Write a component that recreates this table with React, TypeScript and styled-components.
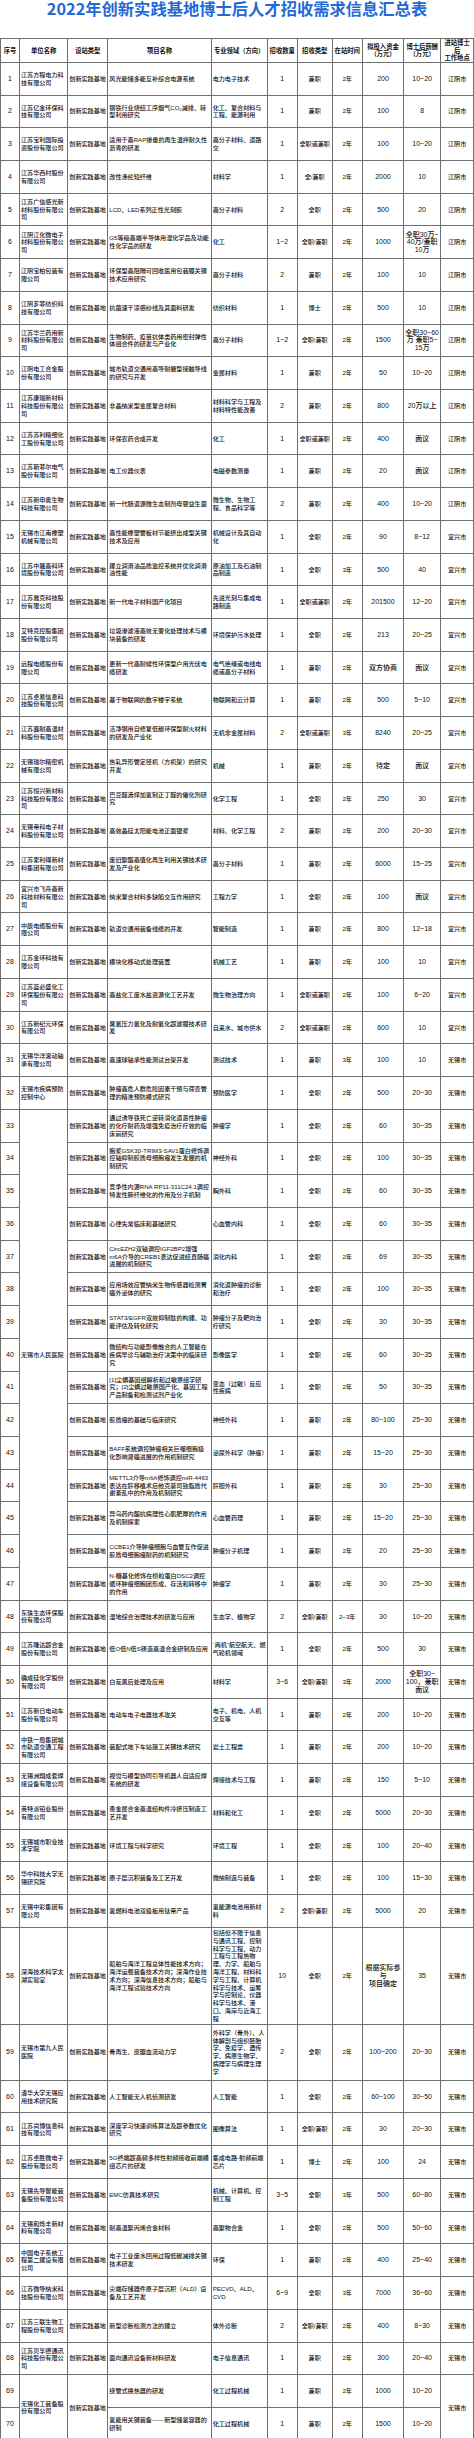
import React from "react";
import styled, {createGlobalStyle} from "styled-components";

type RowData = [number, string | null, string, string, string, string, string, string, string]

const COLS = [19, 48.3, 40, 103.4, 56, 30, 35, 30, 41.6, 36.7, 33.3]

const HEADERS = [
    "序号", "单位名称", "设站类型", "项目名称", "专业领域（方向）", "招收数量", "招收类型",
    "在站时间", "拟投入资金\n（万元）", "博士后薪酬\n（万元）", "进站博士后\n工作地点",
]

// null unit = covered by the merged cell above
const ROWS: RowData[] = [
    [1, "江苏方程电力科技有限公司", "风光能储多能互补综合电源系统", "电力电子技术", "1", "兼职", "2年", "200", "10~20"],
    [2, "江苏亿金环保科技有限公司", "钢铁行业烧结工序烟气CO₂减排、转型利用研究", "化工、复合材料与工程、能源利用", "1", "兼职", "2年", "100", "8"],
    [3, "江苏宝利国际投资股份有限公司", "适用于高RAP掺量的再生温拌耐久性沥青的研发", "高分子材料、道路交", "1", "全职或兼职", "2年", "100", "10~20"],
    [4, "江苏华西村股份有限公司", "改性涤纶短纤维", "材料学", "1", "全/兼职", "2年", "2000", "10"],
    [5, "江苏广信感光新材料股份有限公司", "LCD、LED系列正性光刻胶", "高分子材料", "2", "全职", "2年", "500", "20"],
    [6, "江阴江化微电子材料股份有限公司", "G5等级高端半导体用湿化学品及功能性化学品的研发", "化工", "1~2", "全职/兼职", "2年", "1000", "全职30万~\n40万/兼职\n10万"],
    [7, "江阴宝柏包装有限公司", "环保型高阻隔可回收医用包装膜关键技术应用研究", "高分子材料", "2", "兼职", "2年", "100", "10"],
    [8, "江阴芗菲纺织科技有限公司", "抗菌速干凉感纱线及其面料研发", "纺织材料", "1", "博士", "2年", "500", "10"],
    [9, "江苏华兰药用新材料股份有限公司", "生物制药、疫苗抗体类药用密封弹性体组合件的研发与产业化", "高分子材料", "1~2", "全职/兼职", "2年", "1500", "全职30~60\n万 兼职5~\n15万"],
    [10, "江阴电工合金股份有限公司", "城市轨道交通用高导耐磨型接触导线的研究与开发", "金属材料", "1", "兼职", "2年", "50", "10~20"],
    [11, "江苏康瑞新材料科技股份有限公司", "非晶纳米型金属复合材料", "材料科学与工程及材料特性能改善", "2", "兼职", "2年", "800", "20万以上"],
    [12, "江苏苏利精细化工股份有限公司", "环保农药合成开发", "化工", "1", "全职或兼职", "2年", "400", "面议"],
    [13, "江苏斯菲尔电气股份有限公司", "电工仪器仪表", "电磁参数测量", "1", "兼职", "2年", "20", "面议"],
    [14, "江苏新申奥生物科技有限公司", "新一代肠道源微生态制剂母婴益生菌", "微生物、生物工程、食品科学等", "2", "兼职", "2年", "400", "10~20"],
    [15, "无锡市江南橡塑机械有限公司", "高性能橡塑管板材节能挤出成型关键技术及应用", "机械设计及其自动化", "1", "全职", "2年", "90", "8~12"],
    [16, "江苏中晟高科环境股份有限公司", "建立润滑油品质监控系统并优化润滑油性能", "原油加工及石油制品制造", "1", "全职", "3年", "500", "40"],
    [17, "江苏雅克科技股份有限公司", "新一代电子材料国产化项目", "先进光刻与集成电路制造", "1", "全职或兼职", "2年", "201500", "12~20"],
    [18, "艾特克控股集团股份有限公司", "垃圾渗滤液高效无害化处理技术与模块装备的研发", "环境保护污水处理", "1", "全职", "2年", "213", "20~25"],
    [19, "远程电缆股份有限公司", "更新一代高耐候性环保型户用光伏电缆研发", "电气绝缘或电线电缆或高分子材料", "1", "兼职", "2年", "双方协商", "面议"],
    [20, "江苏卓易信息科技股份有限公司", "基于物联网的数字楼宇系统", "物联网和云计算", "1", "兼职", "2年", "500", "5~10"],
    [21, "江苏嘉耐高温材料股份有限公司", "洁净钢用自修复低碳环保型耐火材料的研发及产业化", "无机非金属材料", "2", "全职或兼职", "3年", "8240", "20~25"],
    [22, "无锡瑞尔精密机械有限公司", "热轧异形管定径机（方机架）的研究开发", "机械", "1", "兼职", "2年", "待定", "面议"],
    [23, "江苏恒兴新材料科技股份有限公司", "巴豆醛选择加氢制正丁醛的催化剂研究", "化学工程", "1", "全职", "2年", "250", "30"],
    [24, "无锡帝科电子材料股份有限公司", "高效晶硅太阳能电池正面银浆", "材料、化学工程", "2", "兼职", "2年", "200", "20~30"],
    [25, "江苏索利得新材料集团有限公司", "废旧聚酯高值化再生利用关键技术研发及产业化", "高分子材料", "1", "兼职", "2年", "6000", "15~25"],
    [26, "宜兴市飞舟高新科技材料有限公司", "纳米复合材料多缺陷交互作用研究", "工程力学", "1", "全职", "2年", "100", "面议"],
    [27, "中辰电缆股份有限公司", "轨道交通用装备线缆的开发", "智能制造", "1", "兼职", "2年", "800", "12~18"],
    [28, "江苏金环科技有限公司", "模块化移动式处理装置", "机械工艺", "1", "兼职", "2年", "100", "10"],
    [29, "江苏蓝必盛化工环保股份有限公司", "高盐化工废水盐资源化工艺开发", "微生物治理方向", "1", "全职或兼职", "2年", "100", "6~20"],
    [30, "江苏新纪元环保有限公司", "臭氧压力氧化及耐氧化超滤膜技术研发", "自来水、城市供水", "2", "全职或兼职", "2年", "600", "10"],
    [31, "无锡华洋滚动轴承有限公司", "高速球轴承性能测试台架开发", "测试技术", "1", "兼职", "3年", "100", "10"],
    [32, "无锡市疾病预防控制中心", "肿瘤高危人群危险因素干预与筛查管理的精准预防模式研究", "预防医学", "1", "全职", "2年", "500", "20~30"],
    [33, "无锡市人民医院", "通过诱导铁死亡逆转消化道恶性肿瘤的化疗耐药及增强免疫治疗疗效的临床前研究", "肿瘤学", "1", "全职", "2年", "60", "30~35"],
    [34, null, "胞浆GSK3β-TRIM3-SAV1蛋白修饰调控轴抑制胶质母细胞瘤发生发展的机制研究", "神经外科", "1", "全职", "2年", "100", "30~35"],
    [35, null, "竞争性内源RNA RP11-311C24.1调控特发性肺纤维化的作用及分子机制", "胸外科", "1", "全职", "2年", "60", "30~35"],
    [36, null, "心律失常临床和基础研究", "心血管内科", "1", "全职", "2年", "60", "30~35"],
    [37, null, "CircEZH2双轴调控IGF2BP2增强m6A介导的CREB1表达促进结直肠癌进展的机制研究", "消化内科", "1", "全职", "2年", "69", "30~35"],
    [38, null, "应用场效应管纳米生物传感器检测胃癌外泌体的研究", "消化道肿瘤的诊断和治疗", "1", "全职", "2年", "100", "30~35"],
    [39, null, "STAT3/EGFR双效抑制肽的构建、功能评估及转化研究", "肿瘤分子及靶向治疗研究", "1", "全职", "2年", "30", "30~35"],
    [40, null, "微结构与功能影像融合的人工智能在疾病早诊与辅助治疗决策中的临床研究", "影像医学", "1", "全职", "2年", "60", "30~35"],
    [41, null, "[1]尘螨基因组解析和过敏原组学研究；[2]尘螨过敏原国产化、基因工程产品制备和检测试剂产业化", "变态（过敏）反应性疾病", "1", "全职", "2年", "50", "30~35"],
    [42, null, "胶质瘤的基础与临床研究", "神经外科", "1", "兼职", "2年", "80~100", "25~30"],
    [43, null, "BAFF系统调控肿瘤相关巨噬细胞极化影响肾癌进展的作用机制研究", "泌尿外科学（肿瘤）", "1", "兼职", "2年", "15~20", "25~30"],
    [44, null, "METTL3介导m6A修饰调控miR-4463表达在肝移植术后他克莫司致脂质代谢紊乱中的作用及机制研究", "肝胆外科", "1", "兼职", "2年", "30", "25~30"],
    [45, null, "异乌药内酯抗病理性心肌肥厚的作用及机制探索", "心血管药理", "1", "兼职", "2年", "15~20", "25~30"],
    [46, null, "CCBE1介导肿瘤细胞与血管互作促进胶质母细胞瘤耐药的机制研究", "肿瘤分子机理", "1", "兼职", "2年", "20", "25~30"],
    [47, null, "N-糖基化修饰在桥粒蛋白DSC2调控循环肿瘤细胞团形成、存活和转移中的作用", "肿瘤学", "1", "兼职", "2年", "30", "25~30"],
    [48, "东珠生态环保股份有限公司", "湿地综合治理技术的研发与应用", "生态学、植物学", "2", "全职/兼职", "2~3年", "30", "10~20"],
    [49, "江苏隆达超合金股份有限公司", "低O低N低S铸造高温合金研制及应用", "“两机”航空航天、燃气轮机领域", "1", "全职", "2年", "500", "30"],
    [50, "确成硅化学股份有限公司", "白炭黑后处理及应用", "材料学", "3~6", "全职/兼职", "3年", "2000", "全职30~\n100，兼职\n面议"],
    [51, "江苏新日电动车股份有限公司", "电动车电子电器技术攻关", "电子、机电、人机交互等", "1", "兼职", "2年", "200", "10~20"],
    [52, "中铁一局集团城市轨道交通工程有限公司", "装配式地下车站施工关键技术研究", "岩土工程类", "1", "兼职", "2年", "200", "10~20"],
    [53, "无锡洲翔成套焊接设备有限公司", "视觉与模型协同引导机器人自适应焊系统的研发", "焊接技术与工程", "1", "兼职", "2年", "150", "5~10"],
    [54, "英特派铂业股份有限公司", "贵金属合金高温结构件冷挤压制造工艺开发", "材料和化工", "1", "全职", "2年", "5000", "20~30"],
    [55, "无锡城市职业技术学院", "环境工程与科学研究", "环境工程", "1", "全职", "2年", "100", "20~40"],
    [56, "华中科技大学无锡研究院", "原子层沉积装备及工艺开发", "微纳制造与装备", "1", "全职", "2年", "100", "15~30"],
    [57, "无锡中彩集团有限公司", "氢燃料电池双极板用钛带产品", "氢能源电池用新材料", "2", "全职/兼职", "2年", "5000", "20"],
    [58, "深海技术科学太湖实验室", "船舶与海洋工程总体性能技术方向；海洋运载装备技术方向；深海作业技术方向；深海信息技术方向；船舶与海洋工程试验技术方向", "包括但不限于信息与通讯工程、控制科学与工程、动力工程与工程热物理、力学、船舶与海洋工程、材料科学与工程、计算机科学与技术、运筹学与控制论、仪器科学与技术、港口、海岸与近海工程", "10", "全职", "2年", "根据实际参与\n项目确定", "35"],
    [59, "无锡市第九人民医院", "骨再生、皮瓣血流动力学", "外科学（骨外）、人体解剖与组织胚胎学、免疫学、遗传学、病原生物学、病理学与病理生理学", "2", "全职", "2年", "100~200", "20~30"],
    [60, "清华大学无锡应用技术研究院", "人工智能无人机侦测研发", "人工智能", "1", "全职", "2年", "60~100", "30~50"],
    [61, "江苏尚博信息科技有限公司", "深度学习快速训练算法及超参数优化研究", "图像算法", "1", "全职/兼职", "2年", "30", "20~30"],
    [62, "江苏卓胜微电子股份有限公司", "5G终端超高频多样性射频接收前端模组芯片的研发", "集成电路-射频前端芯片", "1", "博士", "2年", "100", "24"],
    [63, "无锡先导智能装备股份有限公司", "EMC仿真技术研究", "机械、计算机、控制工程", "3~5", "全职", "3年", "500", "60~80"],
    [64, "无锡和烁丰新材料有限公司", "耐高温聚丙烯合金材料", "高聚物合金", "1", "全职", "2年", "500", "50~60"],
    [65, "中国电子系统工程第二建设有限公司", "电子工业废水回用过程低碳减排关键技术研发", "环保", "1", "兼职", "2年", "400", "25~40"],
    [66, "江苏微导纳米科技股份有限公司", "尖端存储器件原子层沉积（ALD）设备及工艺开发", "PECVD、ALD、CVD", "6~9", "全职", "3年", "7000", "36~60"],
    [67, "江苏三联生物工程股份有限公司", "新型诊断检测方法的建立", "体外诊断", "2", "全职/兼职", "2年", "400", "8~30"],
    [68, "江苏贝孚德通讯科技股份有限公司", "面向通讯设备新材料研发", "电子信息通讯", "1", "兼职", "2年", "300", "20~40"],
    [69, "无锡化工装备股份有限公司", "绕管式换热器的研发", "化工过程机械", "1", "兼职", "2年", "1000", "10~20"],
    [70, null, "氢能用关键装备——新型储氢容器的研制", "化工过程机械", "1", "兼职", "2年", "1500", "10~20"],
]

const UNIT_SPAN: Record<number, number> = {33: 15, 69: 2}
const ROW_HEIGHT: Record<number, number> = {58: 97, 59: 56}

const placeOf = (no: number) => no <= 14 ? "江阴市" : no <= 30 ? "宜兴市" : "无锡市"

export default function App() {
    return (
        <Page>
            <GlobalStyle/>
            <Title>2022年创新实践基地博士后人才招收需求信息汇总表</Title>
            <Table>
                <colgroup>
                    {COLS.map((w, i) => <Col key={i} $w={w}/>)}
                </colgroup>
                <thead>
                <HeadRow>
                    {HEADERS.map(h => <HeadCell key={h}>{h}</HeadCell>)}
                </HeadRow>
                </thead>
                <tbody>
                {ROWS.map(([no, unit, project, field, count, kind, years, fund, salary]) => {
                    const merged = no === 69 || no === 70
                    return (
                        <Row key={no} $h={ROW_HEIGHT[no] ?? 32.72}>
                            <Cell $num>{no}</Cell>
                            {unit !== null && (
                                <Cell $align="left" rowSpan={UNIT_SPAN[no] ?? 1}>{unit}</Cell>
                            )}
                            {no !== 70 && (
                                <BaseCell $align="left" rowSpan={merged ? 2 : 1}>创新实践基地</BaseCell>
                            )}
                            <Cell $align="left">{project}</Cell>
                            <Cell $align="left">{field}</Cell>
                            <Cell $num>{count}</Cell>
                            <Cell>{kind}</Cell>
                            <Cell>{years}</Cell>
                            <Cell $num>{fund}</Cell>
                            <Cell $num>{salary}</Cell>
                            {no !== 70 && (
                                <Cell rowSpan={merged ? 2 : 1}>{placeOf(no)}</Cell>
                            )}
                        </Row>
                    )
                })}
                </tbody>
            </Table>
        </Page>
    )
}

const GlobalStyle = createGlobalStyle`
  html, body {
    margin: 0;
    padding: 0;
    background: #fff;
  }
  body {
    font-family: "Liberation Sans", "Noto Sans CJK SC", sans-serif;
    color: #111;
  }
`
const Page = styled.div`
  width: 474px;
  background: #fff;
`
const Title = styled.h1`
  margin: 0 0 21px;
  height: 17px;
  font-family: "Noto Sans CJK SC", sans-serif;
  font-size: 16.3px;
  line-height: 17px;
  font-weight: 700;
  color: #1f6ad8;
  text-align: center;
  white-space: nowrap;
`
const Table = styled.table`
  width: 473.3px;
  table-layout: fixed;
  border-collapse: collapse;
`
const Col = styled.col<{ $w: number }>`
  width: ${p => p.$w}px;
`
const HeadRow = styled.tr`
  height: 20px;
`
const HeadCell = styled.th`
  border: 1px solid #6f6f6f;
  padding: 0 1px;
  font-size: 6.3px;
  line-height: 7.6px;
  font-weight: 700;
  color: #111;
  text-align: center;
  vertical-align: middle;
  white-space: pre-line;
`
const Row = styled.tr<{ $h: number }>`
  height: ${p => p.$h}px;
`
const Cell = styled.td<{ $align?: "left" | "center"; $num?: boolean }>`
  border: 1px solid #6f6f6f;
  padding: 0 1px;
  font-size: ${p => p.$num ? "7px" : "6.1px"};
  line-height: 7.8px;
  text-align: ${p => p.$align ?? "center"};
  vertical-align: middle;
  white-space: pre-line;
  overflow-wrap: anywhere;
  color: #111;
  font-weight: 500;
`
const BaseCell = styled(Cell)`
  white-space: nowrap;
  overflow: hidden;
`
